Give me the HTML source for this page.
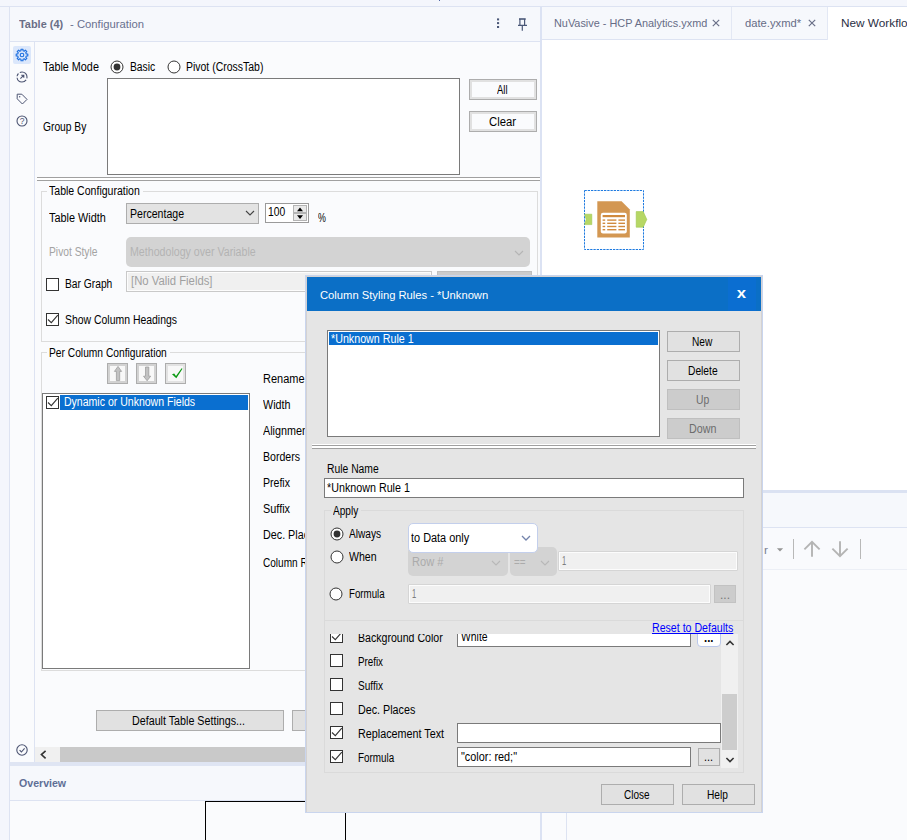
<!DOCTYPE html>
<html><head><meta charset="utf-8"><title>Table Configuration</title><style>
html,body{margin:0;padding:0}
body{width:907px;height:840px;overflow:hidden;position:relative;background:#fafbfd;font-family:"Liberation Sans",sans-serif}
.b{position:absolute;box-sizing:content-box}
.t{position:absolute;white-space:nowrap;line-height:16px;transform-origin:0 0;font-size:12px}
svg{overflow:visible}
</style></head><body>
<div class="b" style="left:0px;top:0px;width:907px;height:6px;background:#f4f6fc;"></div>
<div class="b" style="left:0px;top:0px;width:9px;height:840px;background:#f4f6fc;"></div>
<div class="b" style="left:0px;top:6px;width:907px;height:1px;background:#dde3f2;"></div>
<div class="b" style="left:9px;top:7px;width:1px;height:833px;background:#dde3f2;"></div>
<div class="b" style="left:10px;top:7px;width:530px;height:34px;background:#f6f8fc;"></div>
<div class="b" style="left:10px;top:41px;width:530px;height:1px;background:#dde3f2;"></div>
<div class="b" style="left:34px;top:42px;width:1px;height:720px;background:#dde3f2;"></div>
<div class="b" style="left:540px;top:7px;width:2px;height:833px;background:#dbe2f3;"></div>
<div class="b" style="left:542px;top:7px;width:365px;height:32px;background:#f6f8fc;"></div>
<div class="b" style="left:542px;top:39px;width:286px;height:1px;background:#dde3f2;"></div>
<div class="b" style="left:731px;top:7px;width:1px;height:32px;background:#e3e8f4;"></div>
<div class="b" style="left:827px;top:7px;width:1px;height:33px;background:#e3e8f4;"></div>
<div class="b" style="left:828px;top:7px;width:79px;height:33px;background:#fff;"></div>
<div class="b" style="left:542px;top:40px;width:365px;height:450px;background:#fff;"></div>
<div class="b" style="left:542px;top:490px;width:365px;height:3px;background:#dbe2f2;"></div>
<div class="b" style="left:542px;top:493px;width:365px;height:34px;background:#f6f8fc;"></div>
<div class="b" style="left:542px;top:527px;width:365px;height:1px;background:#dde3f2;"></div>
<div class="b" style="left:542px;top:528px;width:365px;height:41px;background:#f9fafd;"></div>
<div class="b" style="left:542px;top:569px;width:365px;height:1px;background:#eceff6;"></div>
<div class="b" style="left:542px;top:570px;width:365px;height:270px;background:#fafbfd;"></div>
<div class="b" style="left:566px;top:528px;width:1px;height:312px;background:#dde3f2;"></div>
<div class="b" style="left:438.6px;top:0px;width:1.6px;height:1px;background:#5068a8;"></div>
<div class="t" style="left:18.9px;top:16px;font-size:11px;color:#6a6e86;font-weight:bold;transform:scaleX(0.9929);">Table (4)</div>
<div class="t" style="left:70px;top:16px;font-size:11px;color:#69718f;transform:scaleX(1.0256);">- Configuration</div>
<svg class="b" style="left:494px;top:16px;" width="34" height="16" viewBox="0 0 34 16"><g fill="#4b5878"><rect x="3" y="2.4" width="2.1" height="2"/><rect x="3" y="6.1" width="2.1" height="2"/><rect x="3" y="10" width="2.1" height="2"/></g><g fill="none" stroke="#4b5878" stroke-width="1.2"><path d="M25 3h6.7" stroke-width="1.6"/><path d="M25.9 3v6.2M30.6 3v6.2M24 9.4h9M28.3 9.4v5.3"/></g></svg>
<div class="t" style="left:554.3px;top:15px;font-size:11px;color:#666c86;transform:scaleX(0.9899);">NuVasive - HCP Analytics.yxmd</div>
<div class="t" style="left:744.7px;top:15px;font-size:11px;color:#666c86;transform:scaleX(1.0195);">date.yxmd*</div>
<svg class="b" style="left:711px;top:18.4px;" width="10" height="10" viewBox="0 0 10 10"><path d="M1.8 1.8l6.4 6.4M8.2 1.8l-6.4 6.4" stroke="#6a7088" stroke-width="1.2" fill="none"/></svg>
<svg class="b" style="left:807px;top:18.4px;" width="10" height="10" viewBox="0 0 10 10"><path d="M1.8 1.8l6.4 6.4M8.2 1.8l-6.4 6.4" stroke="#6a7088" stroke-width="1.2" fill="none"/></svg>
<div class="t" style="left:840.6px;top:15px;font-size:11px;color:#2a2e44;transform:scaleX(1.0717);">New Workflow1*</div>
<div class="b" style="left:13px;top:46px;width:18px;height:18px;background:#dbe7fb;border-radius:2px;"></div>
<svg class="b" style="left:13px;top:46px;" width="18" height="18" viewBox="0 0 18 18"><path d="M14.81 7.99 L14.81 10.01 L13.28 10.03 L12.75 11.30 L13.83 12.39 L12.39 13.83 L11.30 12.75 L10.03 13.28 L10.01 14.81 L7.99 14.81 L7.97 13.28 L6.70 12.75 L5.61 13.83 L4.17 12.39 L5.25 11.30 L4.72 10.03 L3.19 10.01 L3.19 7.99 L4.72 7.97 L5.25 6.70 L4.17 5.61 L5.61 4.17 L6.70 5.25 L7.97 4.72 L7.99 3.19 L10.01 3.19 L10.03 4.72 L11.30 5.25 L12.39 4.17 L13.83 5.61 L12.75 6.70 L13.28 7.97Z" fill="none" stroke="#1c6fe0" stroke-width="1.1" stroke-linejoin="round"/><circle cx="9" cy="9" r="1.8" fill="none" stroke="#1c6fe0" stroke-width="1.1"/></svg>
<svg class="b" style="left:13px;top:68px;" width="18" height="18" viewBox="0 0 18 18"><circle cx="9" cy="9" r="5" fill="none" stroke="#4c5472" stroke-width="1.1" stroke-dasharray="11.5 1.6 3 1.6 12.1 1.6" stroke-dashoffset="-3"/><path d="M7.4 10.6l3.2-3.2M8.2 7.2h2.6v2.6" fill="none" stroke="#4c5472" stroke-width="1.1"/></svg>
<svg class="b" style="left:13px;top:90px;" width="18" height="18" viewBox="0 0 18 18"><path d="M4.2 4.2h4.6l5.2 5.2-4.6 4.6-5.2-5.2z" fill="none" stroke="#4c5472" stroke-width="1" stroke-linejoin="round"/><circle cx="6.7" cy="6.7" r="0.7" fill="#4c5472"/></svg>
<svg class="b" style="left:13px;top:112px;" width="18" height="18" viewBox="0 0 18 18"><circle cx="9" cy="9" r="5" fill="none" stroke="#4c5472" stroke-width="1.1"/><text x="9" y="11.8" font-size="8.5" text-anchor="middle" fill="#4c5472" font-family="Liberation Sans, sans-serif">?</text></svg>
<svg class="b" style="left:13px;top:741px;" width="18" height="18" viewBox="0 0 18 18"><circle cx="9" cy="9" r="5.2" fill="none" stroke="#4c5472" stroke-width="1.1"/><path d="M6.6 9.2l1.8 1.8 3.2-3.6" fill="none" stroke="#4c5472" stroke-width="1.1"/></svg>
<div class="t" style="left:43.2px;top:59px;font-size:12px;color:#000;transform:scaleX(0.9010);">Table Mode</div>
<svg class="b" style="left:109.5px;top:59.5px;" width="14" height="14" viewBox="0 0 14 14"><circle cx="7" cy="7" r="6" fill="#fff" stroke="#333" stroke-width="1"/><circle cx="7" cy="7" r="3.4" fill="#333"/></svg>
<div class="t" style="left:129.5px;top:59px;font-size:12px;color:#000;transform:scaleX(0.8588);">Basic</div>
<svg class="b" style="left:166.5px;top:59.5px;" width="14" height="14" viewBox="0 0 14 14"><circle cx="7" cy="7" r="6" fill="#fff" stroke="#333" stroke-width="1"/></svg>
<div class="t" style="left:186.4px;top:59px;font-size:12px;color:#000;transform:scaleX(0.8727);">Pivot (CrossTab)</div>
<div class="t" style="left:43.2px;top:119px;font-size:12px;color:#000;transform:scaleX(0.8542);">Group By</div>
<div class="b" style="left:107px;top:78px;width:351px;height:95px;background:#fff;border:1px solid #7a7a7a;"></div>
<div class="b" style="left:469px;top:79px;width:66px;height:19px;background:#fafbfd;border:1px solid #adadad;"></div>
<div class="b" style="left:470px;top:80px;width:62px;height:15px;border:1px solid #e1e1e1;border-width:2px;"></div>
<div class="b" style="left:469px;top:111px;width:66px;height:19px;background:#fafbfd;border:1px solid #adadad;"></div>
<div class="b" style="left:470px;top:112px;width:62px;height:15px;border:1px solid #e1e1e1;border-width:2px;"></div>
<div class="t" style="left:496.95px;top:82px;font-size:12px;color:#000;transform:scaleX(0.7873);">All</div>
<div class="t" style="left:488.5px;top:114px;font-size:12px;color:#000;transform:scaleX(0.9415);">Clear</div>
<div class="b" style="left:37px;top:177px;width:503px;height:1px;background:#a0a0a0;"></div>
<div class="b" style="left:37px;top:180px;width:503px;height:1px;background:#a0a0a0;"></div>
<div class="b" style="left:37px;top:178px;width:503px;height:2px;background:#fff;"></div>
<div class="b" style="left:41px;top:191px;width:495px;height:149px;border:1px solid #dcdcdc;"></div>
<div class="b" style="left:47px;top:186px;width:96px;height:12px;background:#fafbfd;"></div>
<div class="t" style="left:49.4px;top:183px;font-size:12px;color:#000;transform:scaleX(0.8781);">Table Configuration</div>
<div class="t" style="left:49.4px;top:210px;font-size:12px;color:#000;transform:scaleX(0.9060);">Table Width</div>
<div class="b" style="left:126px;top:203px;width:131px;height:19px;background:#e3e3e3;border:1px solid #adadad;"></div>
<div class="t" style="left:130.2px;top:206px;font-size:12px;color:#000;transform:scaleX(0.8798);">Percentage</div>
<svg class="b" style="left:244px;top:209.2px;" width="12" height="8" viewBox="0 0 12 8"><path d="M2.0 2.0L6 6.0L10.0 2.0" fill="none" stroke="#444" stroke-width="1.1"/></svg>
<div class="b" style="left:265px;top:203px;width:42px;height:18px;background:#fff;border:1px solid #9a9a9a;"></div>
<div class="t" style="left:268px;top:204px;font-size:12px;color:#000;transform:scaleX(0.8590);">100</div>
<div class="b" style="left:293px;top:205px;width:12px;height:6px;background:#e9e9e9;border:1px solid #b4b4b4;"></div>
<div class="b" style="left:293px;top:213px;width:12px;height:6px;background:#e9e9e9;border:1px solid #b4b4b4;"></div>
<svg class="b" style="left:293px;top:205px;" width="14" height="16" viewBox="0 0 14 16"><path d="M4 6.2L7 2.5 10 6.2zM4 10.2L7 13.9 10 10.2z" fill="#000"/></svg>
<div class="t" style="left:317.9px;top:210px;font-size:12px;color:#000;transform:scaleX(0.7404);">%</div>
<div class="t" style="left:49.4px;top:244px;font-size:12px;color:#a3a3a3;transform:scaleX(0.8555);">Pivot Style</div>
<div class="b" style="left:126px;top:237px;width:404px;height:30px;background:#d3d3d3;border-radius:5px;"></div>
<div class="t" style="left:129.6px;top:244px;font-size:12px;color:#b3b3b3;transform:scaleX(0.8860);">Methodology over Variable</div>
<svg class="b" style="left:513px;top:248.5px;" width="12" height="8" viewBox="0 0 12 8"><path d="M2.0 2.0L6 6.0L10.0 2.0" fill="none" stroke="#b5b5b5" stroke-width="1.1"/></svg>
<div class="b" style="left:46px;top:278px;width:11px;height:11px;background:#fff;border:1px solid #333;"></div>
<div class="t" style="left:65.3px;top:276px;font-size:12px;color:#000;transform:scaleX(0.8544);">Bar Graph</div>
<div class="b" style="left:126px;top:271px;width:304px;height:19px;background:#f0f0f0;border:1px solid #c9c9c9;box-shadow:inset 0 0 0 1px #fcfcfc;"></div>
<div class="t" style="left:131.4px;top:273px;font-size:12px;color:#a0a0a0;transform:scaleX(0.9424);">[No Valid Fields]</div>
<div class="b" style="left:437px;top:271px;width:93px;height:20px;background:#cccccc;border:1px solid #bfbfbf;"></div>
<div class="b" style="left:46px;top:313px;width:11px;height:11px;background:#fff;border:1px solid #333;"></div>
<svg class="b" style="left:46px;top:313px;" width="13" height="13" viewBox="0 0 13 13"><path d="M2 6.5l3.3 3.1 6.5-7.4" fill="none" stroke="#333" stroke-width="1.1"/></svg>
<div class="t" style="left:65.3px;top:312px;font-size:12px;color:#000;transform:scaleX(0.8700);">Show Column Headings</div>
<div class="b" style="left:41px;top:352px;width:500px;height:317px;border:1px solid #dcdcdc;border-right:none;"></div>
<div class="b" style="left:47px;top:347px;width:123px;height:12px;background:#fafbfd;"></div>
<div class="t" style="left:49.4px;top:345px;font-size:12px;color:#000;transform:scaleX(0.8532);">Per Column Configuration</div>
<div class="b" style="left:107px;top:363px;width:19px;height:19px;background:#f8f8f8;border:1px solid #adadad;"></div>
<div class="b" style="left:108px;top:364px;width:15px;height:15px;border:1px solid #d2d2d2;border-width:2px;"></div>
<div class="b" style="left:136px;top:363px;width:19px;height:19px;background:#f8f8f8;border:1px solid #adadad;"></div>
<div class="b" style="left:137px;top:364px;width:15px;height:15px;border:1px solid #d2d2d2;border-width:2px;"></div>
<div class="b" style="left:165px;top:363px;width:19px;height:19px;background:#f8f8f8;border:1px solid #adadad;"></div>
<div class="b" style="left:166px;top:364px;width:15px;height:15px;border:1px solid #e2e2e2;border-width:2px;"></div>
<svg class="b" style="left:107px;top:363px;" width="21" height="21" viewBox="0 0 21 21"><path d="M11 3.4L14.6 8.4H12.7V17.6H9.4V8.4H7.4z" fill="#c2c2c2" stroke="#969696" stroke-width="0.7"/></svg>
<svg class="b" style="left:136px;top:363px;" width="21" height="21" viewBox="0 0 21 21"><path d="M9.5 4H12.8V13.2H14.7L11.1 17.8 7.5 13.2H9.5z" fill="#c2c2c2" stroke="#969696" stroke-width="0.7"/></svg>
<svg class="b" style="left:165px;top:363px;" width="21" height="21" viewBox="0 0 21 21"><path d="M7 11.3L9.2 10.5 11 13 16.6 5.3 17.5 5.8 11.3 15.2z" fill="#0a9a12"/></svg>
<div class="b" style="left:42px;top:393px;width:206px;height:274px;background:#fff;border:1px solid #7a7a7a;"></div>
<div class="b" style="left:46px;top:396px;width:11px;height:11px;background:#fff;border:1px solid #333;"></div>
<svg class="b" style="left:46px;top:396px;" width="13" height="13" viewBox="0 0 13 13"><path d="M2 6.5l3.3 3.1 6.5-7.4" fill="none" stroke="#333" stroke-width="1.1"/></svg>
<div class="b" style="left:60px;top:395px;width:188px;height:15px;background:#0a6fd0;"></div>
<div class="t" style="left:64.4px;top:394px;font-size:12px;color:#fff;transform:scaleX(0.8776);">Dynamic or Unknown Fields</div>
<div class="t" style="left:263.4px;top:371px;font-size:12px;color:#000;transform:scaleX(0.9149);">Rename</div>
<div class="t" style="left:263.4px;top:397px;font-size:12px;color:#000;transform:scaleX(0.8965);">Width</div>
<div class="t" style="left:263.4px;top:423px;font-size:12px;color:#000;transform:scaleX(0.8995);">Alignment</div>
<div class="t" style="left:263.4px;top:449px;font-size:12px;color:#000;transform:scaleX(0.8805);">Borders</div>
<div class="t" style="left:263.4px;top:475px;font-size:12px;color:#000;transform:scaleX(0.8802);">Prefix</div>
<div class="t" style="left:263.4px;top:501px;font-size:12px;color:#000;transform:scaleX(0.9062);">Suffix</div>
<div class="t" style="left:263.4px;top:527px;font-size:12px;color:#000;transform:scaleX(0.8965);">Dec. Places</div>
<div class="t" style="left:263.4px;top:555px;font-size:12px;color:#000;transform:scaleX(0.8386);">Column Rules</div>
<div class="b" style="left:96px;top:710px;width:186px;height:19px;background:#e1e1e1;border:1px solid #adadad;"></div>
<div class="t" style="left:132.3px;top:713px;font-size:12px;color:#000;transform:scaleX(0.8931);">Default Table Settings...</div>
<div class="b" style="left:292px;top:710px;width:118px;height:19px;background:#e1e1e1;border:1px solid #adadad;"></div>
<div class="b" style="left:35px;top:747px;width:505px;height:15px;background:#f0f0f0;"></div>
<div class="b" style="left:60px;top:747px;width:480px;height:15px;background:#c9c9c9;"></div>
<svg class="b" style="left:38px;top:748px;" width="12" height="14" viewBox="0 0 12 14"><path d="M7.6 2.8L3.4 6.6 7.6 10.4" fill="none" stroke="#333" stroke-width="1.6"/></svg>
<div class="b" style="left:10px;top:762px;width:530px;height:4px;background:#dfe5f3;"></div>
<div class="b" style="left:10px;top:766px;width:530px;height:34px;background:#f6f8fc;"></div>
<div class="b" style="left:10px;top:800px;width:530px;height:1px;background:#dde3f2;"></div>
<div class="t" style="left:19.3px;top:775px;font-size:11px;color:#5f6f96;font-weight:bold;transform:scaleX(0.9628);">Overview</div>
<div class="b" style="left:205px;top:801px;width:139px;height:60px;border:1px solid #000;border-width:1.5px;"></div>
<svg class="b" style="left:580px;top:186px;" width="72" height="68" viewBox="0 0 72 68"><rect x="4.5" y="4.5" width="59" height="59" fill="none" stroke="#1f7be0" stroke-width="1" stroke-dasharray="2.3 0.95"/><path d="M17.3 15.2H41.6L49.8 23.6V51.6H17.3z" fill="#d39752"/><rect x="20.8" y="26.8" width="26" height="20.6" rx="2.2" fill="#fff"/><g fill="#d08a3e"><rect x="22.6" y="29" width="22.4" height="2.2"/><rect x="22.6" y="33.4" width="2.6" height="1.4"/><rect x="27.2" y="33.4" width="9.2" height="1.4"/><rect x="38.4" y="33.4" width="6.6" height="1.4"/><rect x="22.6" y="36.6" width="2.6" height="1.4"/><rect x="27.2" y="36.6" width="9.2" height="1.4"/><rect x="38.4" y="36.6" width="6.6" height="1.4"/><rect x="22.6" y="39.8" width="2.6" height="1.4"/><rect x="27.2" y="39.8" width="9.2" height="1.4"/><rect x="38.4" y="39.8" width="6.6" height="1.4"/><rect x="22.6" y="43.0" width="2.6" height="1.4"/><rect x="27.2" y="43.0" width="9.2" height="1.4"/><rect x="38.4" y="43.0" width="6.6" height="1.4"/></g><path d="M4.5 28.2H11.8V38.6H4.5L6.2 33.4z" fill="#b6d765" stroke="#9fc750" stroke-width="0.6"/><path d="M56.2 25.6H63.2L66.8 33.4 63.2 41.2H56.2z" fill="#b6d765" stroke="#9fc750" stroke-width="0.6"/></svg>
<div class="t" style="left:763.5px;top:542px;font-size:11px;color:#7a7f92;transform:scaleX(1.0918);">r</div>
<svg class="b" style="left:775px;top:546px;" width="10" height="8" viewBox="0 0 10 8"><path d="M1.9 2.3h6.2L5 5.6z" fill="#949494"/></svg>
<div class="b" style="left:793px;top:539px;width:1px;height:20px;background:#b8b8b8;"></div>
<div class="b" style="left:860px;top:539px;width:1px;height:20px;background:#b8b8b8;"></div>
<svg class="b" style="left:802px;top:539px;" width="20" height="20" viewBox="0 0 20 20"><path d="M10 17.8V2.9M2.4 10.4L10 2.8 17.6 10.4" fill="none" stroke="#b4b4b4" stroke-width="1.9"/></svg>
<svg class="b" style="left:830px;top:539px;" width="20" height="20" viewBox="0 0 20 20"><path d="M10 2.2V17.1M2.4 9.6L10 17.2 17.6 9.6" fill="none" stroke="#b4b4b4" stroke-width="1.9"/></svg>
<div class="b" style="left:305px;top:275px;width:458px;height:538px;background:#c9d5ee;"></div>
<div class="b" style="left:306px;top:276px;width:456px;height:536px;background:#d4d2d2;"></div>
<div class="b" style="left:307px;top:277px;width:454px;height:535px;background:#e5e5e5;"></div>
<div class="b" style="left:307px;top:277px;width:454px;height:34px;background:#0b6fc6;"></div>
<div class="b" style="left:728px;top:277px;width:28px;height:34px;background:#0b6ed1;"></div>
<div class="t" style="left:320.3px;top:287px;font-size:11px;color:#fff;transform:scaleX(1.0189);">Column Styling Rules - *Unknown</div>
<svg class="b" style="left:730px;top:284px;" width="24" height="20" viewBox="0 0 24 20"><text x="6.8" y="14.2" font-size="15" font-weight="bold" fill="#fff" textLength="9.3" lengthAdjust="spacingAndGlyphs" font-family="Liberation Sans, sans-serif">x</text></svg>
<div class="b" style="left:327px;top:330px;width:331px;height:105px;background:#fff;border:1px solid #7a7a7a;"></div>
<div class="b" style="left:329px;top:332px;width:329px;height:13px;background:#0a6fd0;"></div>
<div class="t" style="left:331.4px;top:331px;font-size:12px;color:#fff;transform:scaleX(0.8919);">*Unknown Rule 1</div>
<div class="b" style="left:667px;top:331px;width:71px;height:19px;background:#e1e1e1;border:1px solid #adadad;"></div>
<div class="t" style="left:692.35px;top:334px;font-size:12px;color:#000;transform:scaleX(0.8456);">New</div>
<div class="b" style="left:667px;top:360px;width:71px;height:19px;background:#e1e1e1;border:1px solid #adadad;"></div>
<div class="t" style="left:687.7px;top:363px;font-size:12px;color:#000;transform:scaleX(0.8533);">Delete</div>
<div class="b" style="left:667px;top:389px;width:71px;height:19px;background:#cccccc;border:1px solid #bfbfbf;"></div>
<div class="t" style="left:695.9px;top:392px;font-size:12px;color:#6d6d6d;transform:scaleX(0.8605);">Up</div>
<div class="b" style="left:667px;top:418px;width:71px;height:19px;background:#cccccc;border:1px solid #bfbfbf;"></div>
<div class="t" style="left:688.8px;top:421px;font-size:12px;color:#6d6d6d;transform:scaleX(0.8931);">Down</div>
<div class="b" style="left:312px;top:444px;width:444px;height:1px;background:#fff;"></div>
<div class="b" style="left:312px;top:445px;width:444px;height:1px;background:#a0a0a0;"></div>
<div class="b" style="left:312px;top:446px;width:444px;height:2px;background:#fff;"></div>
<div class="b" style="left:312px;top:448px;width:444px;height:1px;background:#a0a0a0;"></div>
<div class="t" style="left:327.3px;top:461px;font-size:12px;color:#000;transform:scaleX(0.8613);">Rule Name</div>
<div class="b" style="left:324px;top:478px;width:418px;height:18px;background:#fff;border:1px solid #7a7a7a;"></div>
<div class="t" style="left:327.3px;top:480px;font-size:12px;color:#000;transform:scaleX(0.8941);">*Unknown Rule 1</div>
<div class="b" style="left:324px;top:510px;width:418px;height:109px;border:1px solid #dadada;"></div>
<div class="b" style="left:331px;top:505px;width:30px;height:12px;background:#e5e5e5;"></div>
<div class="t" style="left:333px;top:503px;font-size:12px;color:#000;transform:scaleX(0.8395);">Apply</div>
<svg class="b" style="left:329.5px;top:526.5px;" width="14" height="14" viewBox="0 0 14 14"><circle cx="7" cy="7" r="6" fill="#fff" stroke="#333" stroke-width="1"/><circle cx="7" cy="7" r="3.4" fill="#333"/></svg>
<div class="t" style="left:349.4px;top:526px;font-size:12px;color:#000;transform:scaleX(0.8445);">Always</div>
<svg class="b" style="left:329.5px;top:550px;" width="14" height="14" viewBox="0 0 14 14"><circle cx="7" cy="7" r="6" fill="#fff" stroke="#333" stroke-width="1"/></svg>
<div class="t" style="left:349.4px;top:549px;font-size:12px;color:#000;transform:scaleX(0.8804);">When</div>
<svg class="b" style="left:328.5px;top:586.5px;" width="14" height="14" viewBox="0 0 14 14"><circle cx="7" cy="7" r="6" fill="#fff" stroke="#333" stroke-width="1"/></svg>
<div class="t" style="left:348.5px;top:586px;font-size:12px;color:#000;transform:scaleX(0.8089);">Formula</div>
<div class="b" style="left:408px;top:547px;width:100px;height:29px;background:#d3d3d3;border-radius:5px;"></div>
<div class="t" style="left:411.5px;top:554px;font-size:12px;color:#ababab;transform:scaleX(0.9231);">Row #</div>
<svg class="b" style="left:489.8px;top:558.6px;" width="12" height="8" viewBox="0 0 12 8"><path d="M2.0 2.0L6 6.0L10.0 2.0" fill="none" stroke="#b8b8b8" stroke-width="1.1"/></svg>
<div class="b" style="left:510px;top:547px;width:47px;height:29px;background:#d3d3d3;border-radius:5px;"></div>
<div class="t" style="left:513.8px;top:554px;font-size:12px;color:#ababab;transform:scaleX(0.8205);">==</div>
<svg class="b" style="left:539px;top:558.6px;" width="12" height="8" viewBox="0 0 12 8"><path d="M2.0 2.0L6 6.0L10.0 2.0" fill="none" stroke="#b8b8b8" stroke-width="1.1"/></svg>
<div class="b" style="left:408px;top:523px;width:128px;height:28px;background:#fff;border:1px solid #c3cfec;border-radius:5px;"></div>
<div class="t" style="left:410.8px;top:530px;font-size:12px;color:#000;transform:scaleX(0.9088);">to Data only</div>
<svg class="b" style="left:520.1px;top:534.4px;" width="12" height="8" viewBox="0 0 12 8"><path d="M2.0 2.0L6 6.0L10.0 2.0" fill="none" stroke="#7383ab" stroke-width="1.3"/></svg>
<div class="b" style="left:558.5px;top:551.5px;width:176.5px;height:16.5px;background:#f0f0f0;border:1px solid #fcfcfc;box-shadow:0 0 0 0.5px #c6c6c6;"></div>
<div class="t" style="left:562px;top:553px;font-size:12px;color:#7d7d7d;transform:scaleX(0.6293);">1</div>
<div class="b" style="left:408.5px;top:584.5px;width:299.5px;height:16.5px;background:#f0f0f0;border:1px solid #fcfcfc;box-shadow:0 0 0 0.5px #c6c6c6;"></div>
<div class="t" style="left:412px;top:586px;font-size:12px;color:#7d7d7d;transform:scaleX(0.6293);">1</div>
<div class="b" style="left:714px;top:585px;width:20px;height:16px;background:#cccccc;border:1px solid #c2c2c2;"></div>
<div class="t" style="left:720px;top:587px;font-size:12px;color:#777;transform:scaleX(0.9999);">...</div>
<div class="b" style="left:324px;top:620px;width:418px;height:151px;border:1px solid #dadada;"></div>
<div class="t" style="left:652.4px;top:620px;font-size:12px;color:#0000ff;transform:scaleX(0.8833);text-decoration:underline;">Reset to Defaults</div>
<div class="b" style="left:325px;top:634px;width:413px;height:134px;overflow:hidden">
<div class="b" style="left:5px;top:-4px;width:11px;height:11px;background:#fff;border:1px solid #333;"></div>
<svg class="b" style="left:5px;top:-4px;" width="13" height="13" viewBox="0 0 13 13"><path d="M2 6.5l3.3 3.1 6.5-7.4" fill="none" stroke="#333" stroke-width="1.1"/></svg>
<div class="t" style="left:33.19999999999999px;top:-4px;font-size:12px;color:#000;transform:scaleX(0.8818);">Background Color</div>
<div class="b" style="left:5px;top:20px;width:11px;height:11px;background:#fff;border:1px solid #333;"></div>
<div class="t" style="left:33.19999999999999px;top:20px;font-size:12px;color:#000;transform:scaleX(0.8150);">Prefix</div>
<div class="b" style="left:5px;top:44px;width:11px;height:11px;background:#fff;border:1px solid #333;"></div>
<div class="t" style="left:33.19999999999999px;top:44px;font-size:12px;color:#000;transform:scaleX(0.8390);">Suffix</div>
<div class="b" style="left:5px;top:68px;width:11px;height:11px;background:#fff;border:1px solid #333;"></div>
<div class="t" style="left:33.19999999999999px;top:68px;font-size:12px;color:#000;transform:scaleX(0.8949);">Dec. Places</div>
<div class="b" style="left:5px;top:92px;width:11px;height:11px;background:#fff;border:1px solid #333;"></div>
<svg class="b" style="left:5px;top:92px;" width="13" height="13" viewBox="0 0 13 13"><path d="M2 6.5l3.3 3.1 6.5-7.4" fill="none" stroke="#333" stroke-width="1.1"/></svg>
<div class="t" style="left:33.19999999999999px;top:92px;font-size:12px;color:#000;transform:scaleX(0.8984);">Replacement Text</div>
<div class="b" style="left:5px;top:116px;width:11px;height:11px;background:#fff;border:1px solid #333;"></div>
<svg class="b" style="left:5px;top:116px;" width="13" height="13" viewBox="0 0 13 13"><path d="M2 6.5l3.3 3.1 6.5-7.4" fill="none" stroke="#333" stroke-width="1.1"/></svg>
<div class="t" style="left:33.19999999999999px;top:116px;font-size:12px;color:#000;transform:scaleX(0.8225);">Formula</div>
<div class="b" style="left:132px;top:-7px;width:232px;height:18px;background:#fff;border:1px solid #7a7a7a;"></div>
<div class="t" style="left:135.60000000000002px;top:-5px;font-size:12px;color:#000;transform:scaleX(0.8672);">White</div>
<div class="b" style="left:372px;top:-7px;width:22px;height:18px;background:#fff;border:1px solid #b9c7ea;border-radius:4px;"></div>
<div class="t" style="left:379px;top:-4px;font-size:12px;color:#000;font-weight:bold;transform:scaleX(0.9499);">...</div>
<div class="b" style="left:132px;top:89px;width:262px;height:18px;background:#fff;border:1px solid #7a7a7a;"></div>
<div class="b" style="left:132px;top:113px;width:232px;height:18px;background:#fff;border:1px solid #7a7a7a;"></div>
<div class="t" style="left:135.60000000000002px;top:115px;font-size:12px;color:#000;transform:scaleX(0.9050);">&quot;color: red;&quot;</div>
<div class="b" style="left:373px;top:114px;width:20px;height:16px;background:#e1e1e1;border:1px solid #adadad;"></div>
<div class="t" style="left:378.5px;top:115px;font-size:12px;color:#000;transform:scaleX(0.8999);">...</div>
<div class="b" style="left:396px;top:0px;width:17px;height:134px;background:#f0f0f0;"></div>
<div class="b" style="left:397px;top:60px;width:15px;height:56px;background:#cdcdcd;"></div>
</div>
<svg class="b" style="left:723.5px;top:639.2px;" width="12" height="8" viewBox="0 0 12 8"><path d="M2.4 6L6 2.4L9.6 6" fill="none" stroke="#333" stroke-width="1.6"/></svg>
<svg class="b" style="left:723.5px;top:755.8px;" width="12" height="8" viewBox="0 0 12 8"><path d="M2.4 2L6 5.6L9.6 2" fill="none" stroke="#333" stroke-width="1.6"/></svg>
<div class="b" style="left:601px;top:784px;width:71px;height:19px;background:#e1e1e1;border:1px solid #adadad;"></div>
<div class="t" style="left:623.75px;top:787px;font-size:12px;color:#000;transform:scaleX(0.8311);">Close</div>
<div class="b" style="left:682px;top:784px;width:71px;height:19px;background:#e1e1e1;border:1px solid #adadad;"></div>
<div class="t" style="left:707.05px;top:787px;font-size:12px;color:#000;transform:scaleX(0.8468);">Help</div>
</body></html>
